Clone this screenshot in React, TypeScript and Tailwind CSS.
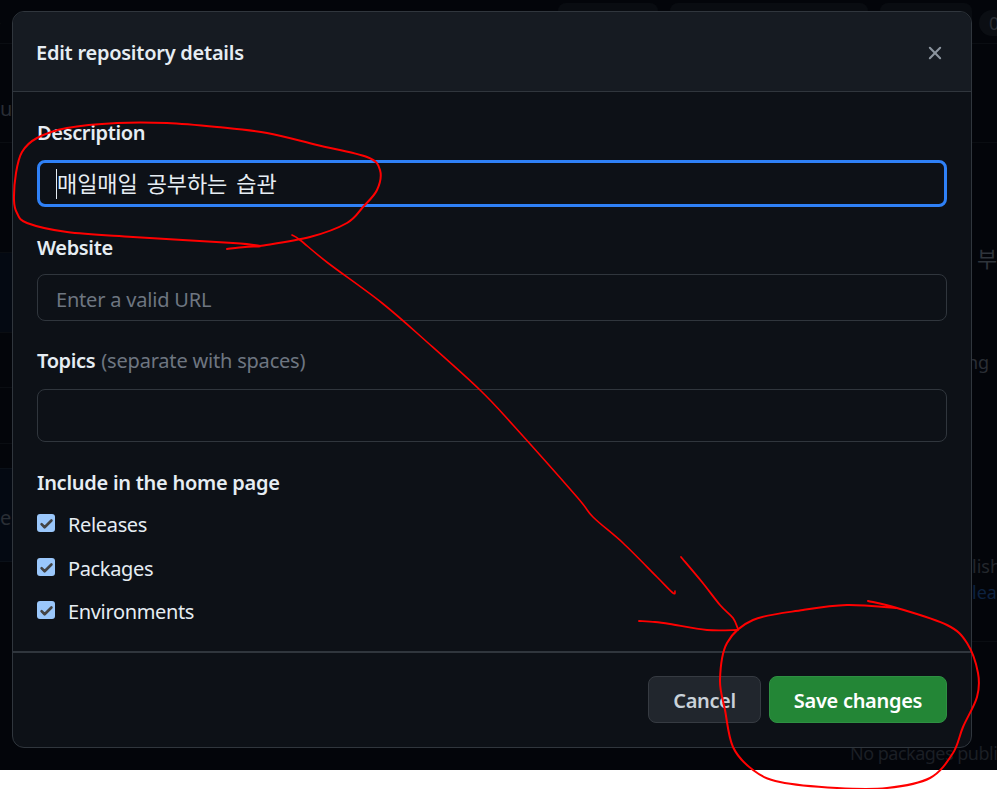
import React from "react";

type P = [number, number];

function smooth(pts: P[]): string {
  let d = `M${pts[0][0]} ${pts[0][1]}`;
  for (let i = 0; i < pts.length - 1; i++) {
    const p0 = pts[Math.max(i - 1, 0)];
    const p1 = pts[i];
    const p2 = pts[i + 1];
    const p3 = pts[Math.min(i + 2, pts.length - 1)];
    const c1: P = [p1[0] + (p2[0] - p0[0]) / 6, p1[1] + (p2[1] - p0[1]) / 6];
    const c2: P = [p2[0] - (p3[0] - p1[0]) / 6, p2[1] - (p3[1] - p1[1]) / 6];
    d += ` C${c1[0]} ${c1[1]} ${c2[0]} ${c2[1]} ${p2[0]} ${p2[1]}`;
  }
  return d;
}

const leftCircle: P[] = [
  [227, 249], [245, 247], [260, 246], [233, 243], [133, 237], [67, 232], [27, 223], [17, 213], [14, 200], [16, 173],
  [22, 152], [37, 138], [67, 128], [117, 123], [167, 123], [217, 127], [267, 133], [317, 145], [367, 157],
  [380, 170], [377, 190], [363, 207], [347, 223], [310, 237], [260, 246],
];
const rightCircle: P[] = [
  [868, 601], [897, 608], [947, 625], [967, 643], [978, 673], [977, 697], [963, 727], [953, 753], [930, 778],
  [887, 788], [837, 788], [780, 782], [753, 770], [733, 747], [725, 710], [720, 680], [727, 643], [753, 620],
  [803, 610], [847, 605], [897, 608],
];
const shaft: P[] = [
  [292, 235], [300, 240], [328, 263], [382, 303], [427, 342], [480, 390], [513, 425], [577, 497], [593, 517],
  [623, 543], [657, 577], [673, 593], [675, 591],
];
const headTop: P[] = [[681, 557], [702, 582], [720, 605], [733, 618], [738, 629]];
const headBottom: P[] = [[738, 630], [707, 630], [670, 624], [655, 622], [639, 621]];

function Scribbles() {
  return (
    <svg className="absolute inset-0 pointer-events-none" width="997" height="789" viewBox="0 0 997 789" fill="none">
      <path d={smooth(leftCircle)} stroke="#ff0000" strokeWidth="2" strokeLinecap="round" />
      <path d={smooth(rightCircle)} stroke="#ff0000" strokeWidth="2" strokeLinecap="round" />
      <path d={smooth(shaft)} stroke="#ff0000" strokeWidth="1.6" strokeLinecap="round" />
      <path d={smooth(headTop)} stroke="#ff0000" strokeWidth="1.8" strokeLinecap="round" />
      <path d={smooth(headBottom)} stroke="#ff0000" strokeWidth="1.8" strokeLinecap="round" />
    </svg>
  );
}

function Check({ label, mt }: { label: string; mt: string }) {
  return (
    <div className={`flex items-start ${mt}`}>
      <span className="w-[18px] h-[18px] rounded-[3px] bg-[#9ac7fb] flex items-center justify-center shrink-0 mt-[2px]">
        <svg width="15" height="15" viewBox="0 0 16 16" fill="#444444">
          <path d="M13.78 4.22a.75.75 0 0 1 0 1.06l-7.25 7.25a.75.75 0 0 1-1.06 0L2.22 9.28a.751.751 0 0 1 1.06-1.06L6 10.94l6.72-6.72a.75.75 0 0 1 1.06 0Z" stroke="#444444" strokeWidth="1.3" />
        </svg>
      </span>
      <span className="ml-[13px] text-[20px] leading-[26px] text-[#e6edf3] tracking-[-0.35px]">{label}</span>
    </div>
  );
}

function Backdrop() {
  return (
    <div className="h-[770px] bg-[#03050a] overflow-hidden flex flex-col text-[18px] text-[#2a2e35]">
      <div className="h-[44px] shrink-0 flex border-b border-[#0a0d12]">
        <div className="w-[558px] shrink-0 h-[40px] flex items-center">
          <span className="ml-[-13px] text-[#0d2240] font-semibold text-[22px] mt-[18px]">C</span>
        </div>
        <div className="flex gap-3 pt-[3px] shrink-0">
          <div className="w-[100px] h-[40px] rounded-t-lg bg-[#090c11]" />
          <div className="w-[198px] h-[40px] rounded-t-lg bg-[#090c11]" />
          <div className="w-[92px] h-[40px] rounded-t-lg bg-[#090c11]" />
        </div>
        <div className="ml-[7px] mt-[10px] w-[34px] h-[26px] rounded-full bg-[#0b0e13] text-[#2a2e35] leading-[26px] pl-[10px] shrink-0">0</div>
      </div>

      <div className="h-[690px] shrink-0 flex justify-between">
        <div className="w-[12px] overflow-hidden flex flex-col text-[20px]">
          <div className="h-[99px] shrink-0 flex items-end pb-[18px] border-b border-[#0a0d12]">
            <span>u</span>
          </div>
          <div className="h-[109px] shrink-0" />
          <div className="h-[81px] shrink-0 bg-[#040912] border-y border-[#0a0d12]" />
          <div className="h-[54px] shrink-0" />
          <div className="h-[57px] shrink-0 border-y border-[#0a0d12]" />
          <div className="h-[24px] shrink-0" />
          <div className="h-[94px] shrink-0 bg-[#040912] border-y border-[#0a1018] pt-[34px]">
            <span>e</span>
          </div>
        </div>

        <div className="w-[25px] overflow-hidden flex flex-col">
          <div className="h-[99px] shrink-0 border-b border-[#0a0d12]" />
          <div className="h-[99px] shrink-0" />
          <div className="h-[32px] shrink-0 flex items-center pl-[5px] text-[22px] text-[#2f343b]">부</div>
          <div className="h-[72px] shrink-0" />
          <div className="h-[32px] shrink-0 flex items-center ml-[-5px]">ng</div>
          <div className="h-[172px] shrink-0" />
          <div className="h-[32px] shrink-0 flex items-center text-[#23272d]">lish</div>
          <div className="h-[20px] shrink-0 flex items-center text-[#0d2240]">lea</div>
          <div className="h-[40px] shrink-0 border-b border-[#0a0d12]" />
        </div>
      </div>

      <div className="flex-1 pl-[850px] whitespace-nowrap text-[#1b1f25] pt-[6px] tracking-[-0.5px]">No packages publi</div>
    </div>
  );
}

export default function App() {
  return (
    <div className="relative w-[997px] h-[789px] bg-white overflow-hidden font-['Noto_Sans','Noto_Sans_CJK_KR',sans-serif]">
      <Backdrop />

      <div className="absolute left-[12px] top-[11px] w-[960px] h-[737px] rounded-[12px] border border-[#30363d] bg-[#0d1117] overflow-hidden flex flex-col">
        <div className="h-[80px] shrink-0 bg-[#161b22] border-b border-[#30363d] flex items-center justify-between pl-[23px] pr-[26px] pt-[2px]">
          <h1 className="text-[20px] font-semibold text-[#e6edf3] tracking-[-0.25px]">Edit repository details</h1>
          <svg width="22" height="22" viewBox="0 0 16 16" fill="#8b949e" className="mr-[-1px]">
            <path d="M3.72 3.72a.75.75 0 0 1 1.06 0L8 6.94l3.22-3.22a.749.749 0 0 1 1.06 1.06L9.06 8l3.22 3.22a.749.749 0 0 1-1.06 1.06L8 9.06l-3.22 3.22a.749.749 0 0 1-1.06-1.06L6.94 8 3.72 4.78a.75.75 0 0 1 0-1.06Z" />
          </svg>
        </div>

        <div className="flex-1 px-[24px] pt-[27px]">
          <label className="block text-[20px] leading-[28px] font-semibold text-[#e6edf3] tracking-[-0.35px]">Description</label>
          <div className="mt-[13px] w-[910px] h-[47px] rounded-[8px] border-[3px] border-[#2f81f7] flex items-center pl-[16px] text-[22px] text-[#e6edf3]">
            <span className="w-[1px] h-[30px] bg-[#e6edf3] shrink-0" />
            <span className="whitespace-nowrap tracking-[-0.1px] [word-spacing:3.5px]">매일매일 공부하는 습관</span>
          </div>

          <label className="block mt-[27px] text-[20px] leading-[28px] font-semibold text-[#e6edf3] tracking-[-0.35px]">Website</label>
          <input
            readOnly
            placeholder="Enter a valid URL"
            className="block mt-[12px] w-[910px] h-[47px] rounded-[8px] border border-[#30363d] bg-transparent pl-[18px] pt-[3px] text-[20px] tracking-[-0.2px] placeholder:text-[#6e7681] outline-none"
          />

          <label className="block mt-[26px] text-[20px] leading-[28px] text-[#6e7681] tracking-[-0.2px]">
            <span className="font-semibold text-[#e6edf3] tracking-[-0.35px]">Topics</span>
            <span className="ml-[1px]"> (separate with spaces)</span>
          </label>
          <input
            readOnly
            className="block mt-[14px] w-[910px] h-[53px] rounded-[8px] border border-[#30363d] bg-transparent outline-none"
          />

          <div className="mt-[27px] text-[20px] leading-[28px] font-semibold text-[#e6edf3] tracking-[-0.27px]">Include in the home page</div>
          <Check label="Releases" mt="mt-[15px]" />
          <Check label="Packages" mt="mt-[18px]" />
          <Check label="Environments" mt="mt-[17px]" />
        </div>

        <div className="h-[96px] shrink-0 border-t-2 border-[#30363d] flex items-start justify-end gap-[8px] pt-[23px] pr-[24px]">
          <button className="w-[113px] h-[47px] rounded-[8px] border border-[#363b42] bg-[#21262d] pt-[2px] text-[20px] font-semibold text-[#c9d1d9] tracking-[-0.35px]">Cancel</button>
          <button className="w-[178px] h-[47px] rounded-[8px] border border-[#2e9042] bg-[#238636] pt-[3px] text-[20px] font-semibold text-white tracking-[-0.3px]">Save changes</button>
        </div>
      </div>

      <Scribbles />
    </div>
  );
}
